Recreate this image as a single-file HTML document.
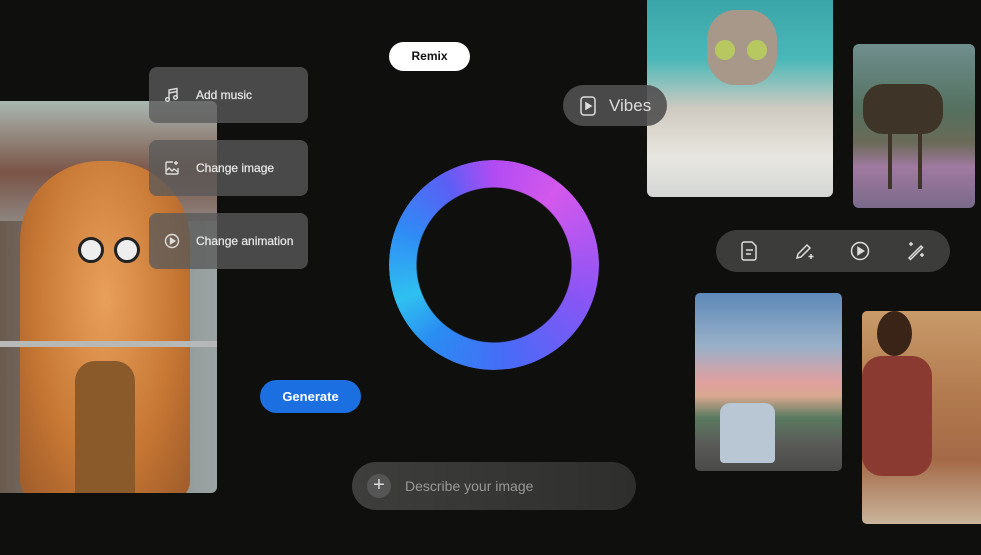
<!DOCTYPE html>
<html><head><style>
body{margin:0;width:981px;height:555px;background:#0f100e;position:relative;overflow:hidden;font-family:"Liberation Sans",sans-serif;}
.a{position:absolute}
.card{position:absolute;left:149px;width:159px;height:56px;border-radius:8px;background:rgba(90,90,90,.78);color:#e6e6e6;font-size:12px;display:flex;align-items:center;-webkit-text-stroke:.25px #e6e6e6}
.card svg{margin-left:15px;margin-right:16px}
</style></head><body>
<div class="a" style="left:0;top:101px;width:217px;height:392px;border-radius:0 6px 6px 0;background:linear-gradient(90deg,#6b5a4e 0%,#8a8a88 50%,#9aa3a3 100%);overflow:hidden">
 <div class="a" style="left:0;top:0;width:217px;height:120px;background:linear-gradient(180deg,#a9b7b3,#7a5446 60%,#8d8580)"></div>
 <div class="a" style="left:20px;top:60px;width:170px;height:340px;border-radius:80px 80px 20px 20px;background:radial-gradient(ellipse at 50% 40%,#e9a05a,#c57633 60%,#9c5a2a)"></div>
 <div class="a" style="left:78px;top:136px;width:20px;height:20px;border-radius:50%;background:#eee;border:3px solid #222"></div>
 <div class="a" style="left:114px;top:136px;width:20px;height:20px;border-radius:50%;background:#eee;border:3px solid #222"></div>
 <div class="a" style="left:0;top:240px;width:217px;height:6px;background:#b8b8b8"></div>
 <div class="a" style="left:75px;top:260px;width:60px;height:132px;background:#8a5a2a;border-radius:20px 20px 0 0"></div>
</div>
<div class="card" style="top:67px"><svg width="16" height="16" viewBox="0 0 16 16" fill="none" stroke="#ddd" stroke-width="1.4"><path d="M5 12V3l8-1.5v9"/><circle cx="3.5" cy="12.5" r="1.8"/><circle cx="11.5" cy="10.5" r="1.8"/><path d="M5 6l8-1.5"/></svg>Add music</div>
<div class="card" style="top:140px"><svg width="16" height="16" viewBox="0 0 16 16" fill="none" stroke="#ddd" stroke-width="1.4"><path d="M9 2H3a1 1 0 0 0-1 1v10a1 1 0 0 0 1 1h10a1 1 0 0 0 1-1V8"/><path d="M2 11l3-3 3 3 2-2 4 3"/><path d="M12 1v4M10 3h4"/></svg>Change image</div>
<div class="card" style="top:213px"><svg width="16" height="16" viewBox="0 0 16 16" fill="none" stroke="#ddd" stroke-width="1.4"><circle cx="8" cy="8" r="6.5"/><path d="M6.5 5.3v5.4L10.8 8z" fill="#ddd"/></svg>Change animation</div>
<div class="a" style="left:389px;top:42px;width:81px;height:29px;border-radius:15px;background:#fff;color:#111;font-size:12px;font-weight:bold;text-align:center;line-height:29px">Remix</div>
<div class="a" style="left:389px;top:160px;width:210px;height:210px;border-radius:50%;background:conic-gradient(from 0deg,#b14cf2,#d458ec 40deg,#8a55f5 110deg,#4a6af7 170deg,#2a8cf2 220deg,#2fc0f0 250deg,#2f8cf5 290deg,#5b5ff5 330deg,#b14cf2);-webkit-mask:radial-gradient(circle,transparent 77px,#000 78px);mask:radial-gradient(circle,transparent 77px,#000 78px)"></div>
<div class="a" style="left:260px;top:380px;width:101px;height:33px;border-radius:17px;background:#1b6fe0;color:#fff;font-size:13px;font-weight:bold;text-align:center;line-height:33px">Generate</div>
<div class="a" style="left:352px;top:462px;width:284px;height:48px;border-radius:24px;background:linear-gradient(90deg,#3e3e3c,#2e2e2c);color:#999;font-size:14px;line-height:48px">
 <div class="a" style="left:15px;top:12px;width:24px;height:24px;border-radius:50%;background:#555;color:#ddd;text-align:center;line-height:23px;font-size:20px">+</div>
 <span class="a" style="left:53px;top:0">Describe your image</span></div>
<div class="a" style="left:647px;top:0;width:186px;height:197px;border-radius:0 0 6px 6px;background:linear-gradient(180deg,#3aa5a8 0%,#4ab8b8 30%,#cfcac0 55%,#e8e6e0 80%,#d4d6d6);overflow:hidden">
 <div class="a" style="left:60px;top:10px;width:70px;height:75px;border-radius:40%;background:#a8988a"></div>
 <div class="a" style="left:68px;top:40px;width:20px;height:20px;border-radius:50%;background:#b8c860"></div>
 <div class="a" style="left:100px;top:40px;width:20px;height:20px;border-radius:50%;background:#b8c860"></div>
</div>
<div class="a" style="left:563px;top:85px;width:104px;height:41px;border-radius:21px;background:rgba(80,80,80,.9);color:#ddd;font-size:17px;line-height:41px">
 <svg class="a" style="left:17px;top:11px" width="16" height="20" viewBox="0 0 16 20" fill="none" stroke="#ddd" stroke-width="1.5"><rect x="1" y="1" width="14" height="18" rx="3"/><path d="M6 7v6l5-3z" fill="#ddd"/></svg>
 <span class="a" style="left:46px;top:0">Vibes</span></div>
<div class="a" style="left:853px;top:44px;width:122px;height:164px;border-radius:6px;background:linear-gradient(180deg,#6f8f8e 0%,#557060 40%,#6a6a58 60%,#a07aa0 75%,#7a6a8a 100%);overflow:hidden">
 <div class="a" style="left:10px;top:40px;width:80px;height:50px;border-radius:20px;background:#3e3428"></div>
 <div class="a" style="left:35px;top:85px;width:4px;height:60px;background:#3e3428"></div>
 <div class="a" style="left:65px;top:85px;width:4px;height:60px;background:#3e3428"></div>
</div>
<div class="a" style="left:716px;top:230px;width:234px;height:42px;border-radius:21px;background:#3c3c3a">
 <svg class="a" style="left:25px;top:11px" width="18" height="20" viewBox="0 0 18 20" fill="none" stroke="#ddd" stroke-width="1.5"><path d="M3 1h8l4 4v12a2 2 0 0 1-2 2H3a2 2 0 0 1-2-2V3a2 2 0 0 1 2-2z"/><path d="M5 9h7M5 13h5"/></svg>
 <svg class="a" style="left:79px;top:11px" width="20" height="20" viewBox="0 0 20 20" fill="none" stroke="#ddd" stroke-width="1.5"><path d="M2 17l1-4 9-9 3 3-9 9z"/><path d="M16 13v5M13.5 15.5h5"/></svg>
 <svg class="a" style="left:134px;top:11px" width="20" height="20" viewBox="0 0 20 20" fill="none" stroke="#ddd" stroke-width="1.5"><circle cx="10" cy="10" r="8.5"/><path d="M8 6.5v7l5.5-3.5z" fill="#ddd"/></svg>
 <svg class="a" style="left:190px;top:11px" width="20" height="20" viewBox="0 0 20 20" fill="none" stroke="#ddd" stroke-width="1.5"><path d="M3 17L15 5l1.5 1.5-12 12z"/><path d="M5 1v4M3 3h4M16 12v4M14 14h4"/></svg>
</div>
<div class="a" style="left:695px;top:293px;width:147px;height:178px;border-radius:5px;background:linear-gradient(180deg,#5e89b8 0%,#9ab0c8 30%,#e0a0a0 50%,#d8a890 58%,#5a7a60 70%,#5a5a58 85%,#4a4a48);overflow:hidden">
 <div class="a" style="left:25px;top:110px;width:55px;height:60px;border-radius:10px 10px 4px 4px;background:#b9c6d4"></div>
</div>
<div class="a" style="left:862px;top:311px;width:119px;height:213px;border-radius:5px 0 0 5px;background:linear-gradient(180deg,#c89a6a 0%,#b27a4e 40%,#a46a48 70%,#c9b49c);overflow:hidden">
 <div class="a" style="left:15px;top:0;width:35px;height:45px;border-radius:50%;background:#3a2418"></div>
 <div class="a" style="left:0;top:45px;width:70px;height:120px;border-radius:20px;background:#8a3a30"></div>
</div>
</body></html>
